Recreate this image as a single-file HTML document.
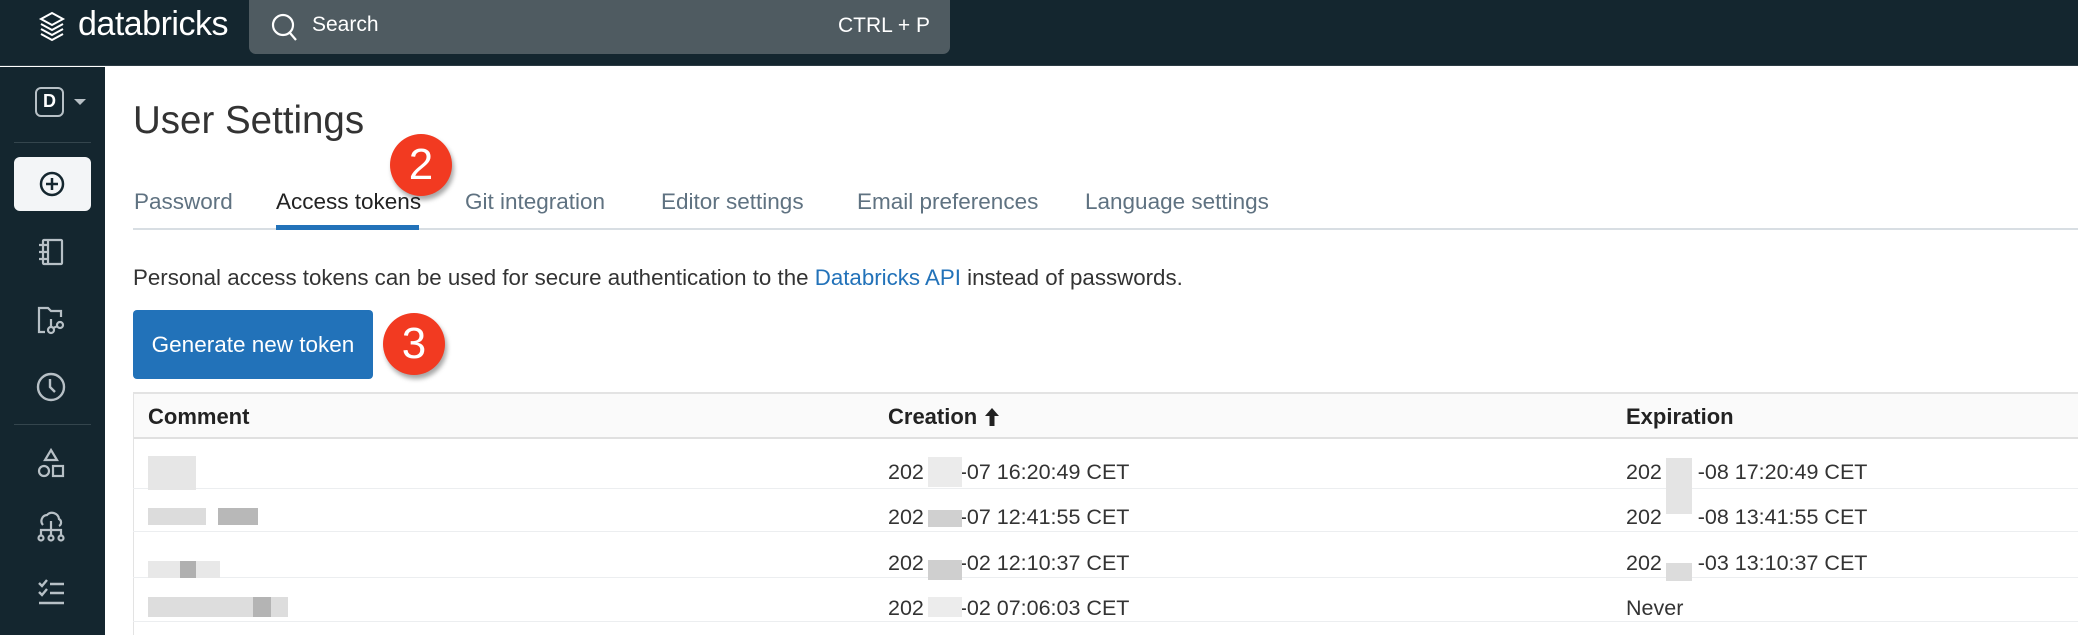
<!DOCTYPE html>
<html><head><meta charset="utf-8"><style>
*{margin:0;padding:0;box-sizing:border-box}
body{width:2078px;height:635px;overflow:hidden;background:#fff;font-family:"Liberation Sans",sans-serif;position:relative}
.a{position:absolute;white-space:nowrap}
.tab{position:absolute;top:189px;font-size:22.5px;color:#5f7281}
.cell{position:absolute;font-size:21.5px;color:#333}
.bl{position:absolute;background:#d6d6d6}
.sep{position:absolute;left:133px;right:0;height:1px;background:#eceef0}
</style></head><body>
<!-- top bar -->
<div class="a" style="left:0;top:0;width:2078px;height:66px;background:#14262f;border-bottom:1px solid #2c3c44"></div>
<svg class="a" style="left:36px;top:10px" width="32" height="32" viewBox="0 0 32 32" fill="none" stroke="#fff" stroke-width="2"><path d="M16 3 L27 9 L16 15 L5 9 Z"/><path d="M5 14 L16 20 L27 14"/><path d="M5 19 L16 25 L27 19"/><path d="M5 24 L16 30 L27 24"/></svg>
<div class="a" style="left:78px;top:5px;font-size:34px;color:#fff;letter-spacing:-0.5px">databricks</div>
<div class="a" style="left:249px;top:0;width:701px;height:54px;background:#4f5b61;border-radius:0 0 7px 7px"></div>
<svg class="a" style="left:270px;top:12px" width="30" height="30" viewBox="0 0 30 30" fill="none" stroke="#fff" stroke-width="2.2"><circle cx="13" cy="13" r="10"/><path d="M20 21 L26 28"/></svg>
<div class="a" style="left:312px;top:13px;font-size:21px;color:#fff">Search</div>
<div class="a" style="left:838px;top:14px;font-size:21px;color:#fff">CTRL + P</div>
<!-- sidebar -->
<div class="a" style="left:0;top:67px;width:105px;height:568px;background:#14262f"></div>
<div class="a" style="left:35px;top:87px;width:29px;height:30px;border:2.5px solid #b7c0c6;border-radius:6px;color:#fff;font-weight:bold;font-size:18px;text-align:center;line-height:25px">D</div>
<div class="a" style="left:74px;top:99px;border-left:6px solid transparent;border-right:6px solid transparent;border-top:6px solid #b7c0c6"></div>
<div class="a" style="left:14px;top:142px;width:77px;height:1px;background:#34454d"></div>
<div class="a" style="left:14px;top:157px;width:77px;height:54px;background:#f3f5f7;border-radius:6px"></div>
<svg class="a" style="left:38px;top:170px" width="28" height="28" viewBox="0 0 28 28" fill="none" stroke="#14262f" stroke-width="2.5"><circle cx="14" cy="14" r="11"/><path d="M14 8v12M8 14h12"/></svg>
<svg class="a" style="left:36px;top:237px" width="30" height="30" viewBox="0 0 30 30" fill="none" stroke="#b7c0c6" stroke-width="2.2"><rect x="7" y="3" width="19" height="24" rx="1"/><path d="M12 3v24M3 8h8M3 15h8M3 22h8"/></svg>
<svg class="a" style="left:36px;top:304px" width="30" height="32" viewBox="0 0 30 32" fill="none" stroke="#b7c0c6" stroke-width="2.2"><path d="M9 28H3V4h9l3 3h10v6"/><circle cx="15" cy="26" r="3"/><circle cx="24" cy="21" r="3"/><path d="M15 23v-8M17 24l5-2"/></svg>
<svg class="a" style="left:35px;top:371px" width="32" height="32" viewBox="0 0 32 32" fill="none" stroke="#b7c0c6" stroke-width="2.4"><circle cx="16" cy="16" r="13"/><path d="M15 8v8l5 5"/></svg>
<div class="a" style="left:14px;top:424px;width:77px;height:1px;background:#34454d"></div>
<svg class="a" style="left:35px;top:447px" width="32" height="32" viewBox="0 0 32 32" fill="none" stroke="#b7c0c6" stroke-width="2.2"><path d="M16 3l6 10H10z"/><circle cx="9" cy="24" r="5"/><rect x="18" y="19" width="10" height="10"/></svg>
<svg class="a" style="left:35px;top:511px" width="32" height="32" viewBox="0 0 32 32" fill="none" stroke="#b7c0c6" stroke-width="2.2"><path d="M8 14a6 6 0 0 1 4-10a7 7 0 0 1 12 4a4 4 0 0 1 0 7"/><path d="M16 10v14M6 24v-5h20v5"/><circle cx="6" cy="27" r="2.5"/><circle cx="16" cy="27" r="2.5"/><circle cx="26" cy="27" r="2.5"/></svg>
<svg class="a" style="left:35px;top:576px" width="32" height="32" viewBox="0 0 32 32" fill="none" stroke="#b7c0c6" stroke-width="2.4"><path d="M4 7l3 3 5-6M4 16l3 3 5-6M15 8h14M15 17h14M4 27h25"/></svg>
<!-- content -->
<div class="a" style="left:133px;top:99px;font-size:38.5px;color:#333">User Settings</div>
<div class="tab" style="left:134px">Password</div>
<div class="tab" style="left:276px;color:#222">Access tokens</div>
<div class="tab" style="left:465px">Git integration</div>
<div class="tab" style="left:661px">Editor settings</div>
<div class="tab" style="left:857px">Email preferences</div>
<div class="tab" style="left:1085px">Language settings</div>
<div class="a" style="left:133px;top:228px;width:1945px;height:2px;background:#d8dee3"></div>
<div class="a" style="left:276px;top:225px;width:143px;height:5px;background:#2272b9"></div>
<div class="a" style="left:390px;top:134px;width:62px;height:62px;border-radius:50%;background:#f23a21;box-shadow:2px 4px 5px rgba(0,0,0,.35);color:#fff;font-size:44px;text-align:center;line-height:62px">2</div>
<div class="a" style="left:133px;top:265px;font-size:22.3px;color:#333">Personal access tokens can be used for secure authentication to the <span style="color:#2272b9">Databricks API</span> instead of passwords.</div>
<div class="a" style="left:133px;top:310px;width:240px;height:69px;background:#2272b9;border-radius:4px;color:#fff;font-size:22.5px;text-align:center;line-height:69px">Generate new token</div>
<div class="a" style="left:383px;top:313px;width:62px;height:62px;border-radius:50%;background:#f23a21;box-shadow:2px 4px 5px rgba(0,0,0,.35);color:#fff;font-size:44px;text-align:center;line-height:62px">3</div>
<!-- table -->
<div class="a" style="left:133px;top:392px;width:1945px;height:47px;background:#fafafa;border-top:2px solid #e3e3e3;border-bottom:2px solid #e0e0e0;border-left:1px solid #e3e3e3"></div>
<div class="a" style="left:133px;top:392px;width:1px;height:243px;background:#e3e3e3"></div>
<div class="cell" style="left:148px;top:404px;font-size:22px;font-weight:bold;color:#222">Comment</div>
<div class="cell" style="left:888px;top:404px;font-size:22px;font-weight:bold;color:#222">Creation</div>
<svg class="a" style="left:983px;top:406px" width="18" height="22" viewBox="0 0 18 22"><path d="M9 2 L16 10 H11.5 V20 H6.5 V10 H2 Z" fill="#222"/></svg>
<div class="cell" style="left:1626px;top:404px;font-size:22px;font-weight:bold;color:#222">Expiration</div>
<div class="sep" style="top:488px"></div><div class="sep" style="top:531px"></div><div class="sep" style="top:577px"></div><div class="sep" style="top:621px"></div>
<div class="cell" style="left:888px;top:460px">202&nbsp;&nbsp;&nbsp;&nbsp;&nbsp;&nbsp;-07 16:20:49 CET</div>
<div class="cell" style="left:888px;top:505px">202&nbsp;&nbsp;&nbsp;&nbsp;&nbsp;&nbsp;-07 12:41:55 CET</div>
<div class="cell" style="left:888px;top:551px">202&nbsp;&nbsp;&nbsp;&nbsp;&nbsp;&nbsp;-02 12:10:37 CET</div>
<div class="cell" style="left:888px;top:596px">202&nbsp;&nbsp;&nbsp;&nbsp;&nbsp;&nbsp;-02 07:06:03 CET</div>
<div class="cell" style="left:1626px;top:460px">202&nbsp;&nbsp;&nbsp;&nbsp;&nbsp;&nbsp;-08 17:20:49 CET</div>
<div class="cell" style="left:1626px;top:505px">202&nbsp;&nbsp;&nbsp;&nbsp;&nbsp;&nbsp;-08 13:41:55 CET</div>
<div class="cell" style="left:1626px;top:551px">202&nbsp;&nbsp;&nbsp;&nbsp;&nbsp;&nbsp;-03 13:10:37 CET</div>
<div class="cell" style="left:1626px;top:596px">Never</div>
<!-- blurred blocks -->
<div class="bl" style="left:148px;top:456px;width:48px;height:34px;background:#e6e6e6"></div>
<div class="bl" style="left:148px;top:508px;width:58px;height:17px;background:#dcdcdc"></div>
<div class="bl" style="left:218px;top:508px;width:40px;height:17px;background:#b8b8b8"></div>
<div class="bl" style="left:148px;top:561px;width:72px;height:17px;background:#e8e8e8"></div>
<div class="bl" style="left:180px;top:561px;width:16px;height:17px;background:#b0b0b0"></div>
<div class="bl" style="left:148px;top:597px;width:140px;height:20px;background:#dddddd"></div>
<div class="bl" style="left:253px;top:597px;width:18px;height:20px;background:#b4b4b4"></div>
<div class="bl" style="left:928px;top:457px;width:34px;height:30px;background:#ebebeb"></div>
<div class="bl" style="left:928px;top:510px;width:34px;height:17px;background:#d0d0d0"></div>
<div class="bl" style="left:928px;top:560px;width:34px;height:20px;background:#cfcfcf"></div>
<div class="bl" style="left:928px;top:597px;width:34px;height:20px;background:#ececec"></div>
<div class="bl" style="left:1666px;top:458px;width:26px;height:56px;background:#e4e4e4"></div>
<div class="bl" style="left:1666px;top:563px;width:26px;height:18px;background:#dcdcdc"></div>
</body></html>
